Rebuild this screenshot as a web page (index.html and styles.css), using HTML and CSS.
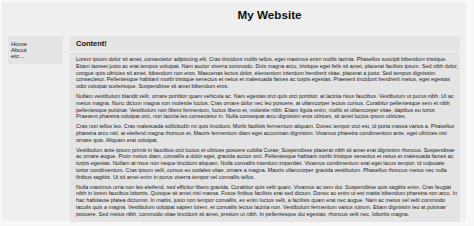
FILE: index.html
```html
<!DOCTYPE html>
<html>
<head>
<meta charset="utf-8">
<link rel="stylesheet" href="styles.css">
</head>
<body>
<div class="wrap">
  <header class="site-header"><h1>My Website</h1></header>
  <div class="main">
    <nav class="side-nav">
      <div>Home</div>
      <div>About</div>
      <div>etc...</div>
    </nav>
    <section class="content">
      <h2>Content!</h2>
      <div class="body">
        <p>Lorem ipsum dolor sit amet, consectetur adipiscing elit. Cras tincidunt mollis tellus, eget maximus enim mollis lacinia. Phasellus suscipit bibendum tristique. Etiam laoreet justo ac erat tempus volutpat. Nam auctor viverra commodo. Duis magna arcu, tristique eget felis sit amet, placerat facilisis ipsum. Sed nibh dolor, congue quis ultricies sit amet, bibendum non eros. Maecenas lectus dolor, elementum interdum hendrerit vitae, placerat a justo. Sed tempus dignissim consectetur. Pellentesque habitant morbi tristique senectus et netus et malesuada fames ac turpis egestas. Praesent tincidunt hendrerit metus, eget egestas odio volutpat scelerisque. Suspendisse sit amet bibendum eros.</p>
        <p>Nullam vestibulum blandit velit, ornare porttitor quam vehicula ac. Nam egestas orci quis orci porttitor, at lacinia risus faucibus. Vestibulum ut purus nibh. Ut ac metus magna. Nunc dictum magna non molestie luctus. Cras ornare dolor nec leo posuere, at ullamcorper lectus cursus. Curabitur pellentesque sem et nibh pellentesque pulvinar. Vestibulum non libero fermentum, luctus libero et, molestie nibh. Etiam ligula enim, mollis et ullamcorper vitae, dapibus eu tortor. Praesent pharetra volutpat orci, non lacinia leo consectetur in. Nulla consequat arcu dignissim eros ultrices, sit amet luctus ipsum ultricies.</p>
        <p>Cras non tellus leo. Cras malesuada sollicitudin mi quis tincidunt. Morbi facilisis fermentum aliquam. Donec tempor orci est, id porta massa varius a. Phasellus pharetra arcu nisl, at eleifend magna rhoncus et. Mauris fermentum diam eget accumsan dignissim. Vivamus pharetra condimentum ante, eget ultricies nisi ornare quis. Aliquam erat volutpat.</p>
        <p>Vestibulum ante ipsum primis in faucibus orci luctus et ultrices posuere cubilia Curae; Suspendisse placerat nibh sit amet erat dignissim rhoncus. Suspendisse ac ornare augue. Proin metus diam, convallis a dolor eget, gravida auctor orci. Pellentesque habitant morbi tristique senectus et netus et malesuada fames ac turpis egestas. Nullam at risus non neque tincidunt aliquam. Nulla convallis interdum imperdiet. Vivamus condimentum erat eget lacus tempor, id vulputate tortor condimentum. Cras ipsum velit, cursus eu sodales vitae, ornare a magna. Mauris ullamcorper gravida vestibulum. Phasellus rhoncus metus nec nulla finibus sagittis. Ut sit amet enim in purus viverra tempor vel convallis tellus.</p>
        <p>Nulla maximus urna non leo eleifend, sed efficitur libero gravida. Curabitur quis velit quam. Vivamus ac sem dui. Suspendisse quis sagittis enim. Cras feugiat nibh in lorem faucibus lobortis. Quisque sit amet nisl massa. Fusce finibus facilisis erat sed dictum. Donec ac enim ut est mattis bibendum pharetra non arcu. In hac habitasse platea dictumst. In mattis, justo non tempor convallis, ex enim luctus velit, a facilisis quam erat nec augue. Nam ac metus vel velit commodo iaculis quis a magna. Vestibulum volutpat sapien lorem, et convallis lectus lacinia non. Vestibulum fermentum varius rutrum. Etiam dignissim leo at pulvinar posuere. Sed metus nibh, commodo vitae tincidunt sit amet, pretium ut nibh. In pellentesque dui egestas, rhoncus velit nec, lobortis magna.</p>
      </div>
    </section>
  </div>
</div>
</body>
</html>
```
FILE: styles.css
```css
html, body {
  margin: 0;
  padding: 0;
  background: #f8f8f8;
  font-family: "Liberation Sans", Arial, sans-serif;
  color: #222;
}
.wrap {
  margin: 2px;
  width: 452px;
  height: 214px;
  padding: 0 6px 5px 6px;
  background: #efefef;
}
.site-header {
  height: 34px;
  padding-left: 71px;
  text-align: center;
}
.site-header h1 {
  margin: 0;
  padding-top: 6px;
  font-size: 11.7px;
  line-height: 13px;
  font-weight: bold;
  color: #111;
}
.main {
  display: flex;
  align-items: flex-start;
  gap: 7px;
}
.side-nav {
  width: 52px;
  padding: 5px 0 5px 3px;
  background: #e4e4e4;
  font-size: 6px;
  line-height: 6px;
  color: #222;
}
.content {
  width: 390px;
  background: #e4e4e4;
}
.content h2 {
  margin: 0;
  padding: 4px 6px 3px;
  font-size: 7.5px;
  line-height: 8px;
  color: #111;
  border-bottom: 1px dotted #fff;
}
.body {
  padding: 4px 2px 4px 6px;
}
.body p {
  margin: 0 0 3px;
  font-size: 5.42px;
  line-height: 6.8px;
  color: #222;
}
.body p:last-child {
  margin-bottom: 0;
}
```
